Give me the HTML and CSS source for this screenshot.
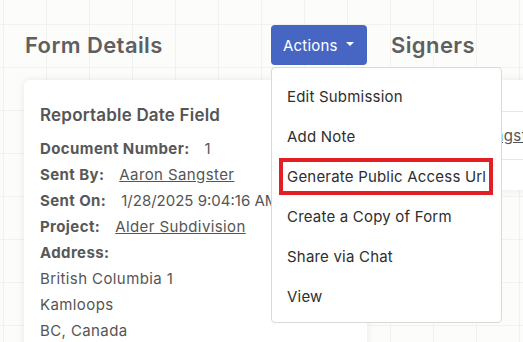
FILE: index.html
```html
<!DOCTYPE html>
<html>
<head>
<meta charset="utf-8">
<link rel="stylesheet" href="styles.css">
</head>
<body>
<div class="page">
  <section class="col-form">
    <div class="head">
      <h1 class="title">Form Details</h1>
      <div class="actions">
        <button class="btn">Actions <span class="caret"></span></button>
        <ul class="menu">
          <li class="item">Edit Submission</li>
          <li class="item">Add Note</li>
          <li class="item hl"><span class="box">Generate Public Access Url</span></li>
          <li class="item">Create a Copy of Form</li>
          <li class="item">Share via Chat</li>
          <li class="item">View</li>
        </ul>
      </div>
    </div>
    <div class="card">
      <h2 class="card-title">Reportable Date Field</h2>
      <div class="row"><span class="lbl">Document Number:</span><span class="val">1</span></div>
      <div class="row"><span class="lbl">Sent By:</span><a class="val link">Aaron Sangster</a></div>
      <div class="row"><span class="lbl">Sent On:</span><span class="val num">1/28/2025 9:04:16 AM</span></div>
      <div class="row"><span class="lbl">Project:</span><a class="val link">Alder Subdivision</a></div>
      <div class="row"><span class="lbl">Address:</span></div>
      <div class="row"><span class="plain">British Columbia 1</span></div>
      <div class="row"><span class="plain">Kamloops</span></div>
      <div class="row"><span class="plain">BC, Canada</span></div>
    </div>
  </section>
  <section class="col-signers">
    <div class="head">
      <h1 class="title">Signers</h1>
    </div>
    <div class="scard">
      <div class="shead"></div>
      <div class="srow"><a class="link">Aaron Sangster</a></div>
      <div class="srow2"></div>
    </div>
  </section>
</div>
</body>
</html>
```

FILE: styles.css
```css
* { box-sizing: border-box; }
html, body { margin: 0; padding: 0; }
body {
  width: 523px;
  height: 342px;
  overflow: hidden;
  font-family: Inter, "Open Sans", sans-serif;
  background-color: #fcfcfb;
  background-image:
    linear-gradient(to right, #f1f1ef 1px, transparent 1px),
    linear-gradient(to bottom, #f1f1ef 1px, transparent 1px);
  background-size: 43px 43px;
  background-position: 3px 24px;
}
.page {
  display: flex;
  gap: 23px;
  padding-left: 24px;
  padding-top: 25px;
}
.col-form { width: 343px; flex: none; }
.col-signers { width: 300px; flex: none; }
.head {
  height: 40px;
  display: flex;
  align-items: center;
  justify-content: space-between;
}
.title {
  margin: 0 0 0 1px;
  font-size: 22px;
  font-weight: 600;
  color: #5f5f5f;
  letter-spacing: 0.4px;
}
.actions { position: relative; height: 40px; }
.btn {
  height: 40px;
  width: 96px;
  border: none;
  border-radius: 4px;
  background: #4766c4;
  color: #fff;
  font-family: inherit;
  font-size: 15px;
  letter-spacing: 0.2px;
  padding: 0 0 0 12px;
  display: flex;
  align-items: center;
  gap: 8px;
}
.caret {
  width: 0; height: 0;
  border-left: 4px solid transparent;
  border-right: 4px solid transparent;
  border-top: 4px solid #fff;
  margin-top: -2px;
}
.menu {
  position: absolute;
  left: 0;
  top: 42px;
  width: 231px;
  margin: 0;
  padding: 8px 0 6px;
  list-style: none;
  background: #fff;
  border: 1px solid #d9d9d9;
  border-radius: 4px;
  z-index: 5;
}
.item {
  height: 40px;
  display: flex;
  align-items: center;
  padding-left: 15px;
  font-size: 15px;
  letter-spacing: 0.2px;
  color: #2e2e2e;
  white-space: nowrap;
}
.item.hl { padding-left: 7px; }
.box {
  display: flex;
  align-items: center;
  width: 214px;
  height: 37px;
  border: 4px solid #e41e25;
  padding-left: 4px;
}
.card {
  margin-top: 15px;
  background: #fff;
  border-radius: 6px;
  box-shadow: 0 0 8px rgba(0,0,0,0.08);
  padding: 22px 16px 20px;
  height: 300px;
}
.card-title {
  margin: 0 0 7px;
  font-size: 17px;
  font-weight: 600;
  letter-spacing: 0.2px;
  color: #555;
  height: 26px;
  line-height: 26px;
}
.row {
  height: 26px;
  display: flex;
  align-items: center;
  gap: 15px;
  font-size: 15px;
  letter-spacing: 0.4px;
  color: #555;
  white-space: nowrap;
}
.lbl { font-weight: 700; color: #585858; letter-spacing: 0.4px; }
.num { letter-spacing: 0; }
.link { text-decoration: underline; color: #555; }
.scard {
  margin-top: 15px;
  background: #fff;
  border-radius: 6px;
  box-shadow: 0 0 8px rgba(0,0,0,0.08);
  height: 110px;
}
.shead { height: 32px; border-bottom: 1px solid #e6e6e6; }
.srow {
  height: 48px;
  border-bottom: 1px solid #e6e6e6;
  display: flex;
  align-items: center;
  padding-left: 37px;
  font-size: 15px;
  letter-spacing: 0.4px;
}
.srow2 { height: 30px; }
```
